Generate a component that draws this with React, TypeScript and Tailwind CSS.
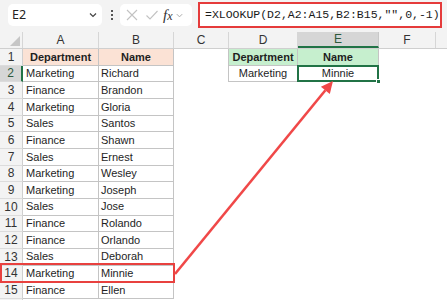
import React from 'react'

const rows: [string, string][] = [
  ['Marketing', 'Richard'],
  ['Finance', 'Brandon'],
  ['Marketing', 'Gloria'],
  ['Sales', 'Santos'],
  ['Finance', 'Shawn'],
  ['Sales', 'Ernest'],
  ['Marketing', 'Wesley'],
  ['Marketing', 'Joseph'],
  ['Sales', 'Jose'],
  ['Finance', 'Rolando'],
  ['Finance', 'Orlando'],
  ['Sales', 'Deborah'],
  ['Marketing', 'Minnie'],
  ['Finance', 'Ellen'],
]

const cols = [
  { label: 'A', w: 'w-[76px]' },
  { label: 'B', w: 'w-[75px]' },
  { label: 'C', w: 'w-[55px]' },
  { label: 'D', w: 'w-[69px]' },
  { label: 'E', w: 'w-[81px]' },
  { label: 'F', w: 'w-[57px]' },
]

function TopBar() {
  return (
    <div className="h-[32px] pb-[2px] bg-[#f3f3f3] flex items-center">
      {/* name box */}
      <div className="ml-[8px] w-[94px] h-[22px] bg-white rounded-[5px] flex items-center justify-between pl-[4px] pr-[4px] text-[12.5px] text-[#222]">
        <span>E2</span>
        <svg width="10" height="10" viewBox="0 0 10 10" fill="none" stroke="#444" strokeWidth="1.2">
          <path d="M2 3.5l3 3 3-3" />
        </svg>
      </div>
      {/* vertical dots */}
      <div className="ml-[8px] w-[4px] flex flex-col items-center gap-[2px]">
        <span className="w-[2px] h-[2px] bg-[#555]" />
        <span className="w-[2px] h-[2px] bg-[#555]" />
        <span className="w-[2px] h-[2px] bg-[#555]" />
      </div>
      {/* cancel / enter / fx */}
      <div className="ml-[6px] w-[72px] h-[22px] bg-white rounded-[5px] flex items-center pl-[5px]">
        <svg width="14" height="14" viewBox="0 0 14 14" fill="none" stroke="#c2c2c2" strokeWidth="1.1">
          <path d="M2 2l10 10M12 2L2 12" />
        </svg>
        <svg className="ml-[6px]" width="14" height="14" viewBox="0 0 14 14" fill="none" stroke="#c2c2c2" strokeWidth="1.1">
          <path d="M1.5 7.5l3.5 3.5 7.5-8" />
        </svg>
        <span className="ml-[4px] font-['Liberation_Serif'] italic text-[15px] leading-none text-[#333]">
          f<span className="text-[12px]">x</span>
        </span>
        <svg className="ml-[2px]" width="9" height="9" viewBox="0 0 10 10" fill="none" stroke="#aaa" strokeWidth="1.1">
          <path d="M2 3.5l3 3 3-3" />
        </svg>
      </div>
      {/* formula */}
      <div className="ml-[6px] w-[244px] h-[26px] bg-white border-2 border-[#e53b3b] flex items-center pl-[5px] font-['Liberation_Mono'] text-[11.5px] text-[#1a1a1a] whitespace-nowrap">
        =XLOOKUP(D2,A2:A15,B2:B15,"",0,-1)
      </div>
    </div>
  )
}

function ColumnHeaders() {
  return (
    <div className="flex h-[17px] bg-[#f3f3f3] border-b border-[#cfcfcf]">
      <div className="w-[23px] shrink-0 relative border-r border-[#d6d6d6]">
        <div className="absolute right-[2px] bottom-[2px] w-0 h-0 border-l-[10px] border-l-transparent border-b-[10px] border-b-[#c6c6c6]" />
      </div>
      {cols.map((c) =>
        c.label === 'E' ? (
          <div
            key={c.label}
            className={`${c.w} shrink-0 flex items-center justify-center bg-[#d6d6d6] border-b-2 border-[#217346] border-r border-r-[#c8c8c8] text-[12px] text-[#2d5a3d]`}
          >
            {c.label}
          </div>
        ) : (
          <div
            key={c.label}
            className={`${c.w} shrink-0 flex items-center justify-center border-r border-[#d6d6d6] text-[12px] text-[#333]`}
          >
            {c.label}
          </div>
        )
      )}
      <div className="flex-1" />
    </div>
  )
}

function RowHead({ n, active }: { n?: number; active?: boolean }) {
  return (
    <div
      className={`w-[23px] shrink-0 flex items-center justify-center text-[12px] border-b border-[#dcdcdc] ${
        active ? 'bg-[#d6d6d6] border-r-2 border-r-[#217346] text-[#2d5a3d]' : 'bg-[#f3f3f3] border-r border-r-[#cfcfcf] text-[#333]'
      }`}
    >
      {n}
    </div>
  )
}

const cell = 'shrink-0 flex items-center border-r border-b border-[#c4c4c4] text-[11px] text-[#1e1e1e] whitespace-nowrap'

function Sheet() {
  return (
    <div className="font-['Liberation_Sans']">
      <ColumnHeaders />
      {/* row 1 */}
      <div className="flex h-[16.67px]">
        <RowHead n={1} />
        <div className={`${cell} w-[76px] justify-center bg-[#fbe2d5] font-bold`}>Department</div>
        <div className={`${cell} w-[75px] justify-center bg-[#fbe2d5] font-bold`}>Name</div>
        <div className="w-[55px] shrink-0 border-r border-[#c4c4c4]" />
        <div className={`${cell} w-[69px] justify-center bg-[#c6efce] font-bold`}>Department</div>
        <div className={`${cell} w-[81px] justify-center bg-[#c6efce] font-bold`}>Name</div>
      </div>
      {rows.map(([dept, name], i) => {
        const n = i + 2
        return (
          <div key={n} className="flex h-[16.67px]">
            <RowHead n={n} active={n === 2} />
            <div className={`${cell} w-[76px] pl-[3px]`}>{dept}</div>
            <div className={`${cell} w-[75px] pl-[2px]`}>{name}</div>
            {n === 2 && (
              <>
                <div className="w-[55px] shrink-0 border-r border-[#c4c4c4]" />
                <div className={`${cell} w-[69px] justify-center`}>Marketing</div>
                <div className={`${cell} w-[81px] justify-center relative`}>
                  Minnie
                  <div className="absolute -left-[1px] -top-[1px] -right-[1px] -bottom-[1px] border-2 border-[#217346]" />
                  <div className="absolute -right-[3px] -bottom-[3px] w-[5px] h-[5px] bg-[#217346] border border-white" />
                </div>
              </>
            )}
          </div>
        )
      })}
      {/* row 16, only its top edge is in view */}
      <div className="flex h-[16.67px]">
        <RowHead />
      </div>
    </div>
  )
}

export default function App() {
  return (
    <div className="relative w-[447px] h-[300px] overflow-hidden bg-white">
      <TopBar />
      <Sheet />
      {/* highlight around row 14 */}
      <div className="absolute left-0 top-[263px] w-[175px] h-[20px] border-2 border-[#e8413f]" />
      {/* arrow */}
      <svg className="absolute inset-0 pointer-events-none" width="447" height="300" viewBox="0 0 447 300">
        <line x1="175" y1="274" x2="325.4" y2="90.3" stroke="#f04848" strokeWidth="2.6" />
        <polygon points="333,81 329.8,94 320.9,86.7" fill="#f04848" />
      </svg>
    </div>
  )
}
